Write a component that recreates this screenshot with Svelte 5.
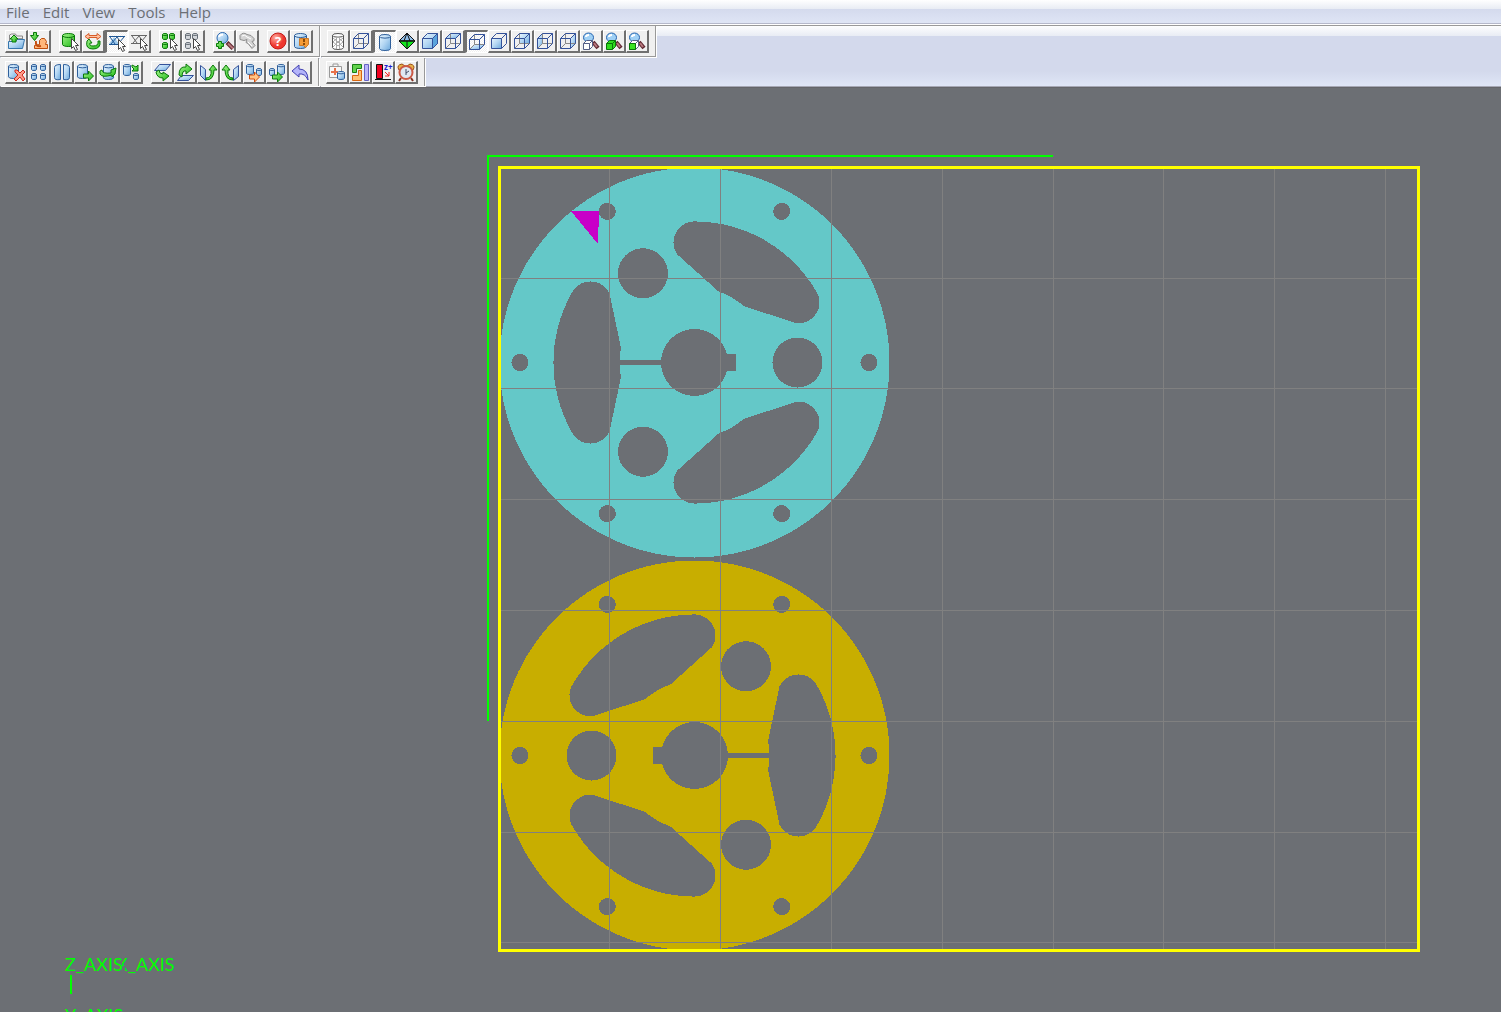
<script>
  const menus = ["File", "Edit", "View", "Tools", "Help"];

  const blue = "#2f5f9b";
  const sky = "url(#sky)";
  const lime = "url(#lime)";
  const leaf = "#087808";
  const navy = "#34529a";

  // every shape is [path, fill, stroke, stroke width]
  function cyl(x, y, w, h, fill = sky, stroke = blue) {
    const r = w / 2;
    const e = Math.max(1, w / 6);
    return [
      [`M${x} ${y + e}a${r} ${e} 0 0 1 ${w} 0v${h - 2 * e}a${r} ${e} 0 0 1 ${-w} 0z`, fill, stroke, 1],
      [`M${x} ${y + e}a${r} ${e} 0 0 0 ${w} 0`, "none", stroke, 1]
    ];
  }

  function cursor(x, y) {
    return [[`M${x} ${y}v10l2-2 2 4 2-1-2-4h3z`, "#fff", "#444", 1]];
  }

  function wireCube(face) {
    const faces = {
      top: "M7.5 2.5h10l-5 5h-10z",
      bottom: "M7.5 12.5h10l-5 5h-10z",
      front: "M2.5 7.5h10v10h-10z",
      back: "M7.5 2.5h10v10h-10z",
      left: "M2.5 7.5l5-5v10l-5 5z",
      right: "M12.5 7.5l5-5v10l-5 5z"
    };
    return [
      ...(face ? [[faces[face], sky, "none", 0]] : []),
      ...(face === "front" ? [] : [["M7.5 2.5v10h10M7.5 12.5l-5 5", "none", "#888", 1]]),
      ["M2.5 7.5h10v10h-10zM2.5 7.5l5-5h10v10l-5 5M12.5 7.5l5-5", "none", navy, 1]
    ];
  }

  function smallCube(fill, stroke, x = 2, y = 9) {
    return [
      [`M${x + 0.5} ${y + 3.5}l3-3h6v6l-3 3h-6z`, fill, stroke, 1],
      [`M${x + 0.5} ${y + 3.5}h6v6M${x + 6.5} ${y + 3.5}l3-3`, "none", stroke, 1]
    ];
  }

  function lens(cx, cy, r) {
    return [
      [`M${cx + r - 1} ${cy + r - 1}l6 6`, "none", "#5f2730", 4],
      [`M${cx + r} ${cy + r}l5 5`, "none", "#b8777d", 2],
      [`M${cx - r} ${cy}a${r} ${r} 0 1 1 ${2 * r} 0a${r} ${r} 0 1 1 ${-2 * r} 0z`, sky, "#2a68b0", 1],
      [`M${cx - r + 2} ${cy - 1}q1-3 4-2`, "none", "#fff", 2]
    ];
  }

  const zoomLens = [
    ["M12 11l5 6", "none", "#5f2730", 4],
    ["M13 12l3 4", "none", "#b8777d", 2],
    ["M2.5 6.5a5 4.5 0 1 1 10 0a5 4.5 0 1 1 -10 0z", "#9fd0f5", "#2462ae", 1],
    ["M5 6q0-2 3-2", "none", "#fff", 2]
  ];

  function arrowRight(x, y, fill = lime, stroke = leaf) {
    return [[`M${x} ${y + 2.5}h5v-3l5 5-5 5v-3h-5z`, fill, stroke, 1]];
  }

  function four(fill, stroke) {
    return [
      ...cyl(2.5, 2.5, 5, 6, fill, stroke),
      ...cyl(9.5, 2.5, 5, 6, fill, stroke),
      ...cyl(2.5, 11.5, 5, 6, fill, stroke)
    ];
  }

  function planes(stroke, fill) {
    return [
      ["M7 5l-5 7h10z", fill, "none", 0],
      ["M2 4.5h16M2 12.5h11M3 5l5 7M10 5l-6 7M10 5l5 7M17 5l-5 6", "none", stroke, 1]
    ];
  }

  const icons = {
    open: [
      ["M3.5 13v-9l2-1h4l1 2h6v9z", "#eee", "#888", 1],
      ["M11 7.5h5", "none", "#999", 1],
      ["M2.5 17.5v-7h7l2-2h7l-2 9z", sky, "#3676ad", 1],
      ["M8 4l4 4h-2v3h-4v-3h-2z", lime, leaf, 1]
    ],
    import: [
      ["M5.5 17.5v-3l5-1v-4l2-2h3l2 3-1 3h2v4z", "#ffb679", "#bd4b09", 1],
      ["M4.5 1.5h3v3h2l-4 5-4-5h3z", lime, leaf, 1],
      ["M7 10q-1 6 5 5", "none", "#c64e0d", 2]
    ],
    pick: [...cyl(2.5, 2.5, 12, 13, lime, leaf), ...cursor(11.5, 7.5)],
    flip: [
      ["M2 5.5l4-3v2h8v-2l4 3-4 3v-2h-8v2z", "#ffc3a3", "#d75c2a", 1],
      ["M4 10q-2 8 6 8q8 0 7-8h-2q1 5-5 5q-4 0-3-3h2l-3-4z", lime, leaf, 1]
    ],
    pickPlane: [...planes("#1f5795", "#9bc8ec"), ...cursor(11.5, 7.5)],
    pickEdge: [...planes("#666", "none"), ...cursor(11.5, 7.5)],
    pickAll: [...four(lime, leaf), ...cursor(10.5, 7.5)],
    pickNone: [...four("#d5d8dc", "#666e77"), ...cursor(10.5, 7.5)],
    zoomIn: [
      ...lens(8.5, 7, 5.5),
      ["M4.5 10.5h3v2h2v3h-2v2h-3v-2h-2v-3h2z", lime, leaf, 1]
    ],
    settings: [
      ["M3 4.5q3-4 7-1l4 1 3 3q1 3-2 3l3 4-3 3-4-5-2-1 1-3-3 1-4-1z", "#d4d4d4", "#8d8d8d", 1],
      ["M5 5q3-2 5 1l4 2M11 11l4 4", "none", "#fff", 1]
    ],
    help: [["M2 10a8 8 0 1 1 16 0a8 8 0 1 1 -16 0z", "url(#ball)", "#c41c19", 1]],
    info: [
      ...cyl(3.5, 2.5, 12, 15),
      ["M8.5 7.5h9v6l-3 3-2-2h-4z", "#f59b36", "#c9792c", 1],
      ["M13 8v3M13 12v2", "none", "#8a4a08", 2]
    ],
    mesh: [
      ...cyl(4.5, 2.5, 11, 16, "#fff", "#555"),
      ["M5 7l5 4 5-4M5 11l5 4 5-4M5 11l5-5 5 5M5 16l5-5 5 5M8.5 5v13M11.5 5v13", "none", "#aaa", 1]
    ],
    wire: wireCube(),
    solid: cyl(4.5, 2.5, 11, 16),
    diamond: [
      ["M10 2l-8 8h16z", "#91bfe9", "#111", 1],
      ["M2 10h16l-8 8z", "#13e41d", "#111", 1],
      ["M10 2l-3 8M10 2l3 8M2 10h16M10 10v8", "none", "#111", 1]
    ],
    iso: [
      ["M2.5 7.5l5-5h10v10l-5 5h-10z", sky, navy, 1],
      ["M12 8l5-5v10l-5 5z", "#5ba4dd", "none", 0],
      ["M2.5 7.5h10v10M12.5 7.5l5-5v10l-5 5", "none", navy, 1]
    ],
    top: wireCube("top"),
    bottom: wireCube("bottom"),
    front: wireCube("front"),
    back: wireCube("back"),
    left: wireCube("left"),
    right: wireCube("right"),
    zoomWire: [...zoomLens, ...smallCube("#fff", "#555f87")],
    zoomSolid: [...zoomLens, ...smallCube("#30db1f", leaf)],
    zoomFace: [
      ...zoomLens,
      ...smallCube("#fff", "#555f87"),
      ["M2.5 12.5h6v6h-6z", "#39e323", leaf, 1]
    ],
    remove: [
      ...cyl(2.5, 2.5, 10, 14),
      ["M9 8l2 0 3 3 3-3 2 2-3 3 3 4-2 2-3-4-4 4-2-2 4-4-3-3z", "#ff9b88", "#cf261b", 1]
    ],
    array: [
      ...cyl(2.5, 2.5, 5, 6),
      ...cyl(11.5, 2.5, 5, 6),
      ...cyl(2.5, 11.5, 5, 6),
      ...cyl(11.5, 11.5, 5, 6)
    ],
    split: [
      ["M8.5 2.5q-6 0-6 3v10q0 3 6 2z", sky, blue, 1],
      ["M11.5 2.5q6 0 6 3v10q0 3-6 2z", sky, blue, 1]
    ],
    move: [...cyl(2.5, 2.5, 10, 14), ...arrowRight(8.5, 9.5)],
    rotate: [
      ...cyl(5.5, 2.5, 10, 15),
      ["M2 9l2-1q0 4 9 3v-3l5-2-1 6-3 3v-2q-10 3-12-1z", lime, leaf, 1]
    ],
    scale: [
      ...cyl(2.5, 2.5, 7, 11),
      ...cyl(12.5, 11.5, 5, 6),
      ["M11 3l4 2 2-2v6h-6l2-2-2-2z", lime, leaf, 1]
    ],
    planeDown: [
      ["M7.5 2.5h11l-5 6h-11z", sky, navy, 1],
      ["M7 8l-3 2q1 6 7 6v3l6-5-6-4v2q-4 0-4-4z", lime, leaf, 1]
    ],
    planeUp: [
      ["M6.5 13.5h12l-5 5h-11z", sky, navy, 1],
      ["M4 13q0-9 7-8v-3l6 5-6 5v-3q-4-1-4 6z", lime, leaf, 1]
    ],
    planeLeft: [
      ["M2.5 3.5l5 4v11l-5-5z", sky, navy, 1],
      ["M8 16q6 0 5-8h-2l4-5 4 5h-3q0 10-8 10z", lime, leaf, 1]
    ],
    planeRight: [
      ["M12.5 7.5l5-4v11l-5 4z", sky, navy, 1],
      ["M12 16q-6 0-5-8h2l-4-5-4 5h3q0 10 8 10z", lime, leaf, 1]
    ],
    swapOut: [
      ...cyl(2.5, 2.5, 7, 10),
      ...cyl(12.5, 6.5, 5, 7),
      ...arrowRight(5.5, 10.5, "#ffc487", "#d24c0c")
    ],
    swapIn: [
      ...cyl(10.5, 2.5, 7, 10),
      ...cyl(2.5, 6.5, 5, 7),
      ...arrowRight(5.5, 10.5)
    ],
    undo: [["M2 9l7-6v4q9 0 9 11q-3-7-9-6v3z", "#b3b4fa", "#4140b2", 1]],
    repair: [
      ["M6 4v-2h5v2M2.5 4.5h12v11h-12z", "#f7f7f7", "#999", 1],
      ["M8 6v7M4 10h7", "none", "#e8714a", 2],
      ...cyl(10.5, 9.5, 7, 8)
    ],
    nest: [
      ["M2.5 2.5h9v4h-5v4h-4z", "#61d34c", "#167d15", 1],
      ["M8.5 8.5h3v10h-9v-5h6z", "#ffc172", "#d86610", 1],
      ["M14.5 2.5h4v16h-4z", "#b9b4f8", "#6562c5", 1]
    ],
    zero: [
      ["M3.5 2.5h6v14h-6z", "#f00020", "#111", 1],
      ["M2 17.5h16", "none", "#111", 1],
      ["M12 10l4 4M16 10v4h-4", "none", "#ee2222", 1]
    ],
    clock: [
      ["M5 16l-2 3M15 16l2 3", "none", "#843021", 2],
      ["M3 8q-3-5 3-6l3 2zM17 8q3-5-3-6l-3 2z", "#e8b347", "#9b5014", 1],
      ["M3.5 10.5a6.5 6.5 0 1 1 13 0a6.5 6.5 0 1 1 -13 0z", "#dfe8f2", "#cc5a45", 2],
      ["M10 7v4l3-2M10 11v2", "none", "#414c66", 1]
    ]
  };

  const rows = [
    [
      [
        ["open", "import"],
        ["pick", "flip", "pickPlane", "pickEdge"],
        ["pickAll", "pickNone"],
        ["zoomIn", "settings"],
        ["help", "info"]
      ],
      [
        ["mesh", "wire", "solid", "diamond", "iso", "top", "bottom", "front", "back", "left", "right", "zoomWire", "zoomSolid", "zoomFace"]
      ]
    ],
    [
      [
        ["remove", "array", "split", "move", "rotate", "scale"],
        ["planeDown", "planeUp", "planeLeft", "planeRight", "swapOut", "swapIn", "undo"]
      ],
      [["repair", "nest", "zero", "clock"]]
    ]
  ];

  let pressed = $state({ pickPlane: true, solid: true, bottom: true });

  const gridX = [609, 720, 831, 942, 1053, 1163, 1274, 1385];
  const gridY = [278, 388, 499, 610, 721, 832, 942];
  const slot = "M-123-69A21 21 0 0 1-85-69L-73.5-14.5A75 75 0 0 0-73.5 14.5L-85 69A21 21 0 0 1-123 69A141 141 0 0 1-123-69z";
</script>

{#snippet part(x, y, turn, fill)}
  <g transform="translate({x} {y}) rotate({turn})">
    <circle r="195" {fill} />
    <g fill="#6c6f74">
      {#each [0, 60, 120, 180, 240, 300] as a}
        <circle cx="174.5" r="8.5" transform="rotate({a})" />
      {/each}
      {#each [0, 120, 240] as a}
        <circle cx="103" r="25" transform="rotate({a})" />
        <path d={slot} transform="rotate({a})" />
      {/each}
      <circle r="33.5" />
      <rect x="28" y="-8.5" width="13.4" height="17" />
      <rect x="-76" y="-2.5" width="50" height="5" />
    </g>
  </g>
{/snippet}

<svg class="defs" aria-hidden="true">
  <linearGradient id="sky" x2="1" y2="1">
    <stop offset="0" stop-color="#eaf7ff" />
    <stop offset="0.5" stop-color="#b3d6f3" />
    <stop offset="1" stop-color="#6ba8dc" />
  </linearGradient>
  <linearGradient id="lime" x2="1" y2="1">
    <stop offset="0" stop-color="#a4f58b" />
    <stop offset="1" stop-color="#20ba18" />
  </linearGradient>
  <radialGradient id="ball" cx="0.35" cy="0.3">
    <stop offset="0" stop-color="#ffada0" />
    <stop offset="1" stop-color="#ef382f" />
  </radialGradient>
</svg>

<nav>
  {#each menus as menu}
    <button class="menu">{menu}</button>
  {/each}
</nav>

<header>
  {#each rows as row}
    <div class="row">
      {#each row as bar}
        <div class="bar" role="toolbar">
          {#each bar as group}
            <div class="group">
              {#each group as name}
                <button
                  class="tool"
                  class:pressed={pressed[name]}
                  aria-label={name}
                  onclick={() => (pressed[name] = !pressed[name])}>
                  <svg viewBox="0 0 20 20">
                    {#each icons[name] as [d, fill, stroke, width]}
                      <path {d} {fill} {stroke} stroke-width={width} />
                    {/each}
                    {#if name === "help"}
                      <text class="mark" x="10" y="15">?</text>
                    {:else if name === "zero"}
                      <text class="z" x="11" y="8">z+</text>
                    {/if}
                  </svg>
                </button>
              {/each}
            </div>
          {/each}
        </div>
      {/each}
    </div>
  {/each}
</header>

<main>
  <svg class="view" viewBox="0 88 1501 924">
    {@render part(694.5, 362.5, 0, "#64c8c8")}
    {@render part(694.5, 755.5, 180, "#c8ae00")}
    <path d="M571 211h28l-1 33z" fill="#c800c8" />
    <g stroke="#808080">
      {#each gridX as x}
        <path d="M{x}.5 168V950" />
      {/each}
      {#each gridY as y}
        <path d="M500 {y}.5H1418" />
      {/each}
    </g>
    <path d="M1053 156H488V721" fill="none" stroke="#0f0" stroke-width="2" />
    <rect x="499.5" y="167.5" width="919" height="783" fill="none" stroke="#ff0" stroke-width="3" />
    <g class="axis">
      <text x="116" y="971">X_AXIS</text>
      <rect x="64" y="957" width="58" height="17" fill="#6c6f74" />
      <rect x="120" y="966" width="5" height="6" fill="#6c6f74" />
      <text x="65" y="971">Z_AXIS</text>
      <text x="65" y="1022">Y_AXIS</text>
      <rect x="70" y="975" width="2" height="19" />
    </g>
  </svg>
</main>

<style>
  :global(body) {
    background: #6c6f74;
    font-family: "Open Sans", "Noto Sans", sans-serif;
  }
  .defs {
    position: absolute;
    width: 0;
    height: 0;
  }
  nav {
    display: flex;
    gap: 13px;
    height: 23px;
    padding-left: 6px;
    background: linear-gradient(#fff, #e8ecf4 9px, #d4daed 9px, #dfe5f5);
    border-bottom: 1px solid #b5b8ca;
  }
  button {
    margin: 0;
    padding: 0;
    border: none;
    background: none;
    font-family: inherit;
  }
  .menu {
    color: #6b6f75;
    font-size: 15px;
    line-height: 24px;
  }
  header {
    border-top: 1px solid #fff;
    border-bottom: 1px solid #a6a8b5;
    box-shadow: inset 0 1px #999;
    padding-top: 1px;
    background: linear-gradient(#fff, #e8ecf4 11px, #d3d9ec 11px, #d3d9ec 46px, #dfe6f6);
  }
  .row {
    display: flex;
  }
  .bar {
    display: flex;
    gap: 8px;
    padding: 4px 6px 3px;
    background: #f0f0f0;
    border-right: 1px solid #999;
    border-bottom: 1px solid #999;
    box-shadow: 1px 1px #fff;
    margin: 0 1px 1px 0;
  }
  .bar:first-child {
    padding-left: 5px;
  }
  .row:last-child .bar {
    padding: 3px 6px 2px;
    border-bottom: none;
    margin-bottom: 0;
  }
  .row:last-child .bar:first-child {
    padding-left: 5px;
  }
  .group {
    display: flex;
  }
  .tool {
    width: 23px;
    height: 23px;
    border-style: solid;
    border-width: 1px 2px 2px 1px;
    border-color: #fff #707070 #707070 #fff;
    background: #f0f0f0;
  }
  .tool.pressed {
    border-width: 2px 1px 1px 2px;
    border-color: #707070 #fff #fff #707070;
    background: repeating-conic-gradient(#fff 0 25%, #f0f0f0 0 50%) 0 0 / 2px 2px;
  }
  .tool svg {
    display: block;
    width: 20px;
    height: 20px;
    overflow: visible;
  }
  .mark {
    fill: #fff;
    font-size: 13px;
    font-weight: bold;
    text-anchor: middle;
  }
  .z {
    fill: #2020d0;
    font-size: 8px;
    font-weight: bold;
  }
  main {
    border-top: 1px solid #646569;
  }
  .view {
    display: block;
    width: 100%;
    shape-rendering: crispEdges;
  }
  .axis {
    fill: #0f0;
    font-family: Lato, sans-serif;
    font-size: 18px;
  }
</style>
